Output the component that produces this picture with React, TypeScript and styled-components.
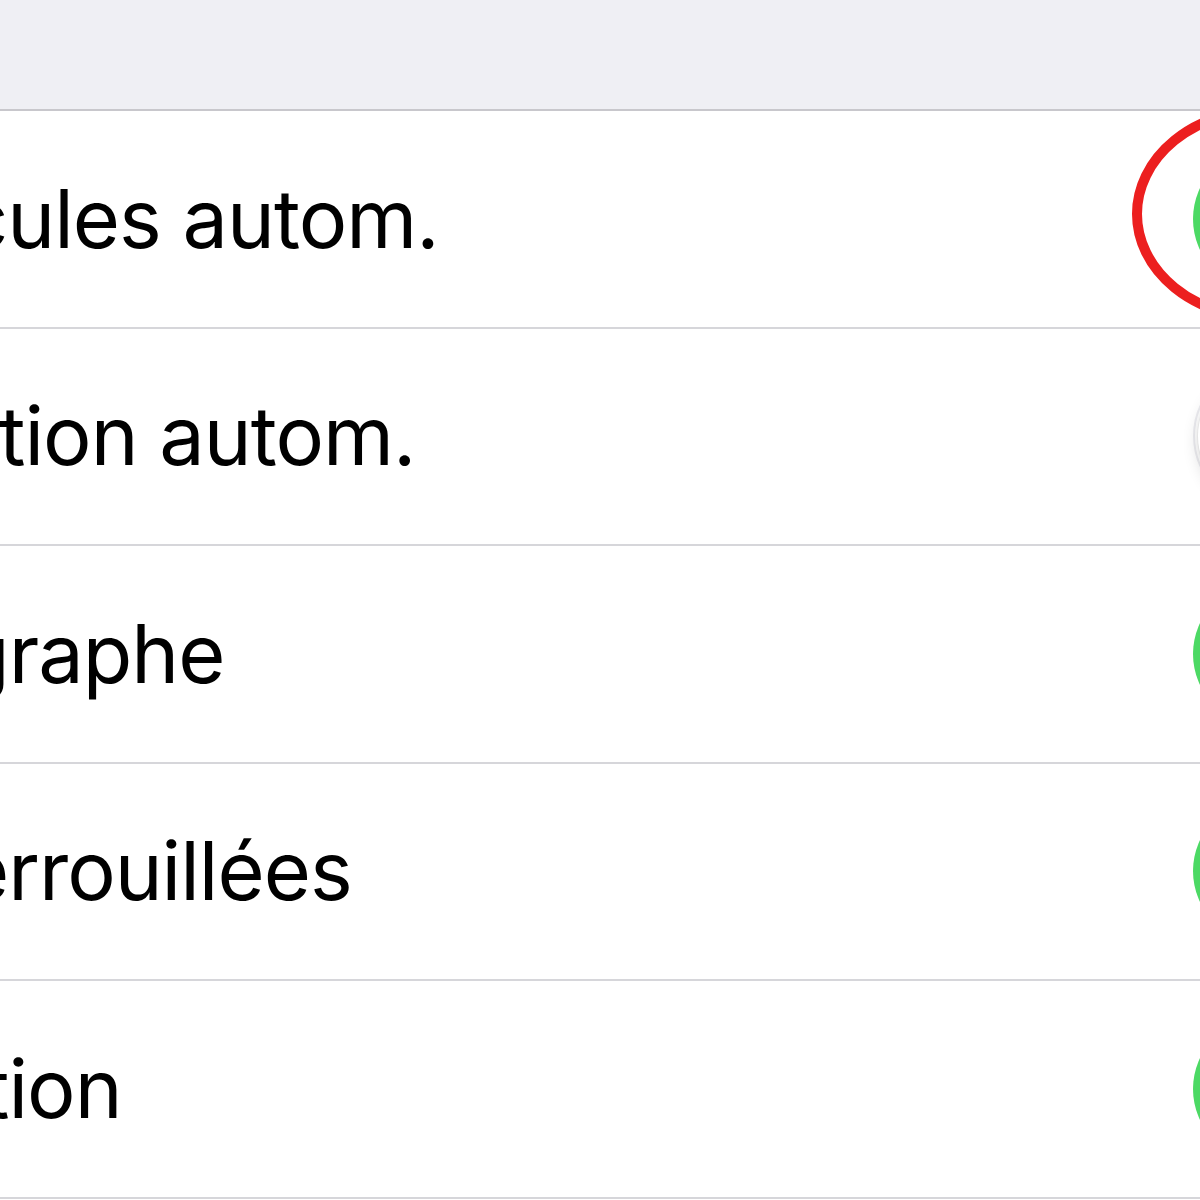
import React from 'react';
import styled, { createGlobalStyle } from 'styled-components';

const GlobalStyle = createGlobalStyle`
  html, body {
    margin: 0;
    padding: 0;
    background: #ffffff;
  }
  body {
    font-family: Inter, "Liberation Sans", sans-serif;
    -webkit-font-smoothing: antialiased;
  }
`;

const Screen = styled.div`
  position: relative;
  width: 1200px;
  height: 1200px;
  overflow: hidden;
  background: #ffffff;
`;

const GroupHeader = styled.div`
  height: 109px;
  background: #efeff4;
  border-bottom: 2px solid #c8c7cc;
`;

const List = styled.div`
  display: flex;
  flex-direction: column;
`;

const Row = styled.div`
  display: flex;
  align-items: center;
  justify-content: space-between;
  height: 215.5px;
  background: #ffffff;
  border-bottom: 2px solid #d6d6da;
`;

const Label = styled.span<{ $shift: number }>`
  margin-left: ${(p) => p.$shift}px;
  font-size: 81px;
  font-weight: 400;
  color: #000000;
  letter-spacing: -1px;
  white-space: nowrap;
`;

const Track = styled.div<{ $on: boolean }>`
  position: relative;
  flex: none;
  width: 238px;
  height: 144px;
  margin-right: -231px;
  border-radius: 72px;
  box-sizing: border-box;
  background: ${(p) => (p.$on ? '#4cd964' : '#ffffff')};
  border: ${(p) => (p.$on ? 'none' : '2px solid #ececf0')};
`;

const Knob = styled.div`
  position: absolute;
  top: 3px;
  left: 3px;
  width: 134px;
  height: 134px;
  border-radius: 50%;
  background: #ffffff;
  box-shadow: 0 6px 16px rgba(0, 0, 0, 0.16), 0 0 0 1px rgba(0, 0, 0, 0.04);
`;

const Annotation = styled.svg`
  position: absolute;
  left: 1110px;
  top: 95px;
  width: 90px;
  height: 240px;
  pointer-events: none;
`;

type Setting = { text: string; shift: number; on: boolean };

const settings: Setting[] = [
  { text: 'cules autom.', shift: -38, on: true },
  { text: 'tion autom.', shift: -1, on: false },
  { text: 'graphe', shift: -40, on: true },
  { text: 'errouillées', shift: -38, on: true },
  { text: 'tion', shift: -17, on: true },
];

function Toggle({ on }: { on: boolean }): JSX.Element {
  return <Track $on={on}>{!on && <Knob />}</Track>;
}

export default function App(): JSX.Element {
  return (
    <>
      <GlobalStyle />
      <Screen>
        <GroupHeader />
        <List>
          {settings.map((s) => (
            <Row key={s.text}>
              <Label $shift={s.shift}>{s.text}</Label>
              <Toggle on={s.on} />
            </Row>
          ))}
        </List>
        <Annotation viewBox="1110 95 90 240">
          <ellipse cx="1265" cy="214" rx="128" ry="104" fill="none" stroke="#ec1f1f" strokeWidth="10" />
        </Annotation>
      </Screen>
    </>
  );
}
